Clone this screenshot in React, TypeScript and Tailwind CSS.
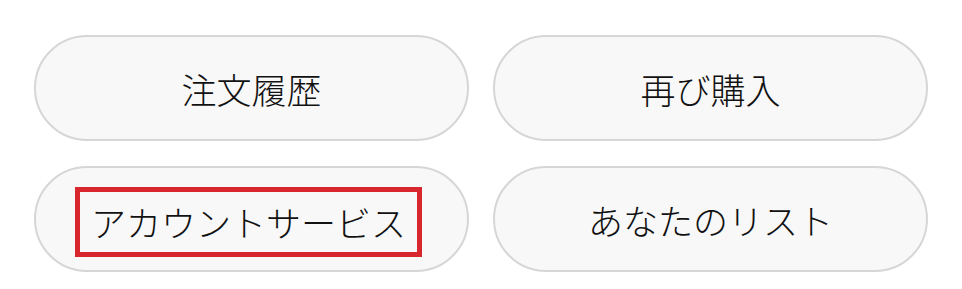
import React from "react";

const font = { fontFamily: '"Noto Sans CJK JP", "Noto Sans", sans-serif' };

function Pill({ children }: { children: React.ReactNode }) {
  return (
    <button className="flex h-[106px] items-center justify-center rounded-full border-2 border-[#d6d6d6] bg-[#f8f8f8] text-[35px] font-light leading-none text-[#111111]">
      {children}
    </button>
  );
}

export default function App() {
  return (
    <div className="h-[289px] w-[962px] bg-white" style={font}>
      <div className="grid grid-cols-2 gap-x-[24px] gap-y-[25px] px-[34px] pt-[35px]">
        <Pill>注文履歴</Pill>
        <Pill>再び購入</Pill>
        <Pill>
          <span className="mt-[6px] ml-[-6px] border-[5px] border-[#d7262c] px-[11px] py-[10px] leading-[40px]">
            アカウントサービス
          </span>
        </Pill>
        <Pill>あなたのリスト</Pill>
      </div>
    </div>
  );
}
